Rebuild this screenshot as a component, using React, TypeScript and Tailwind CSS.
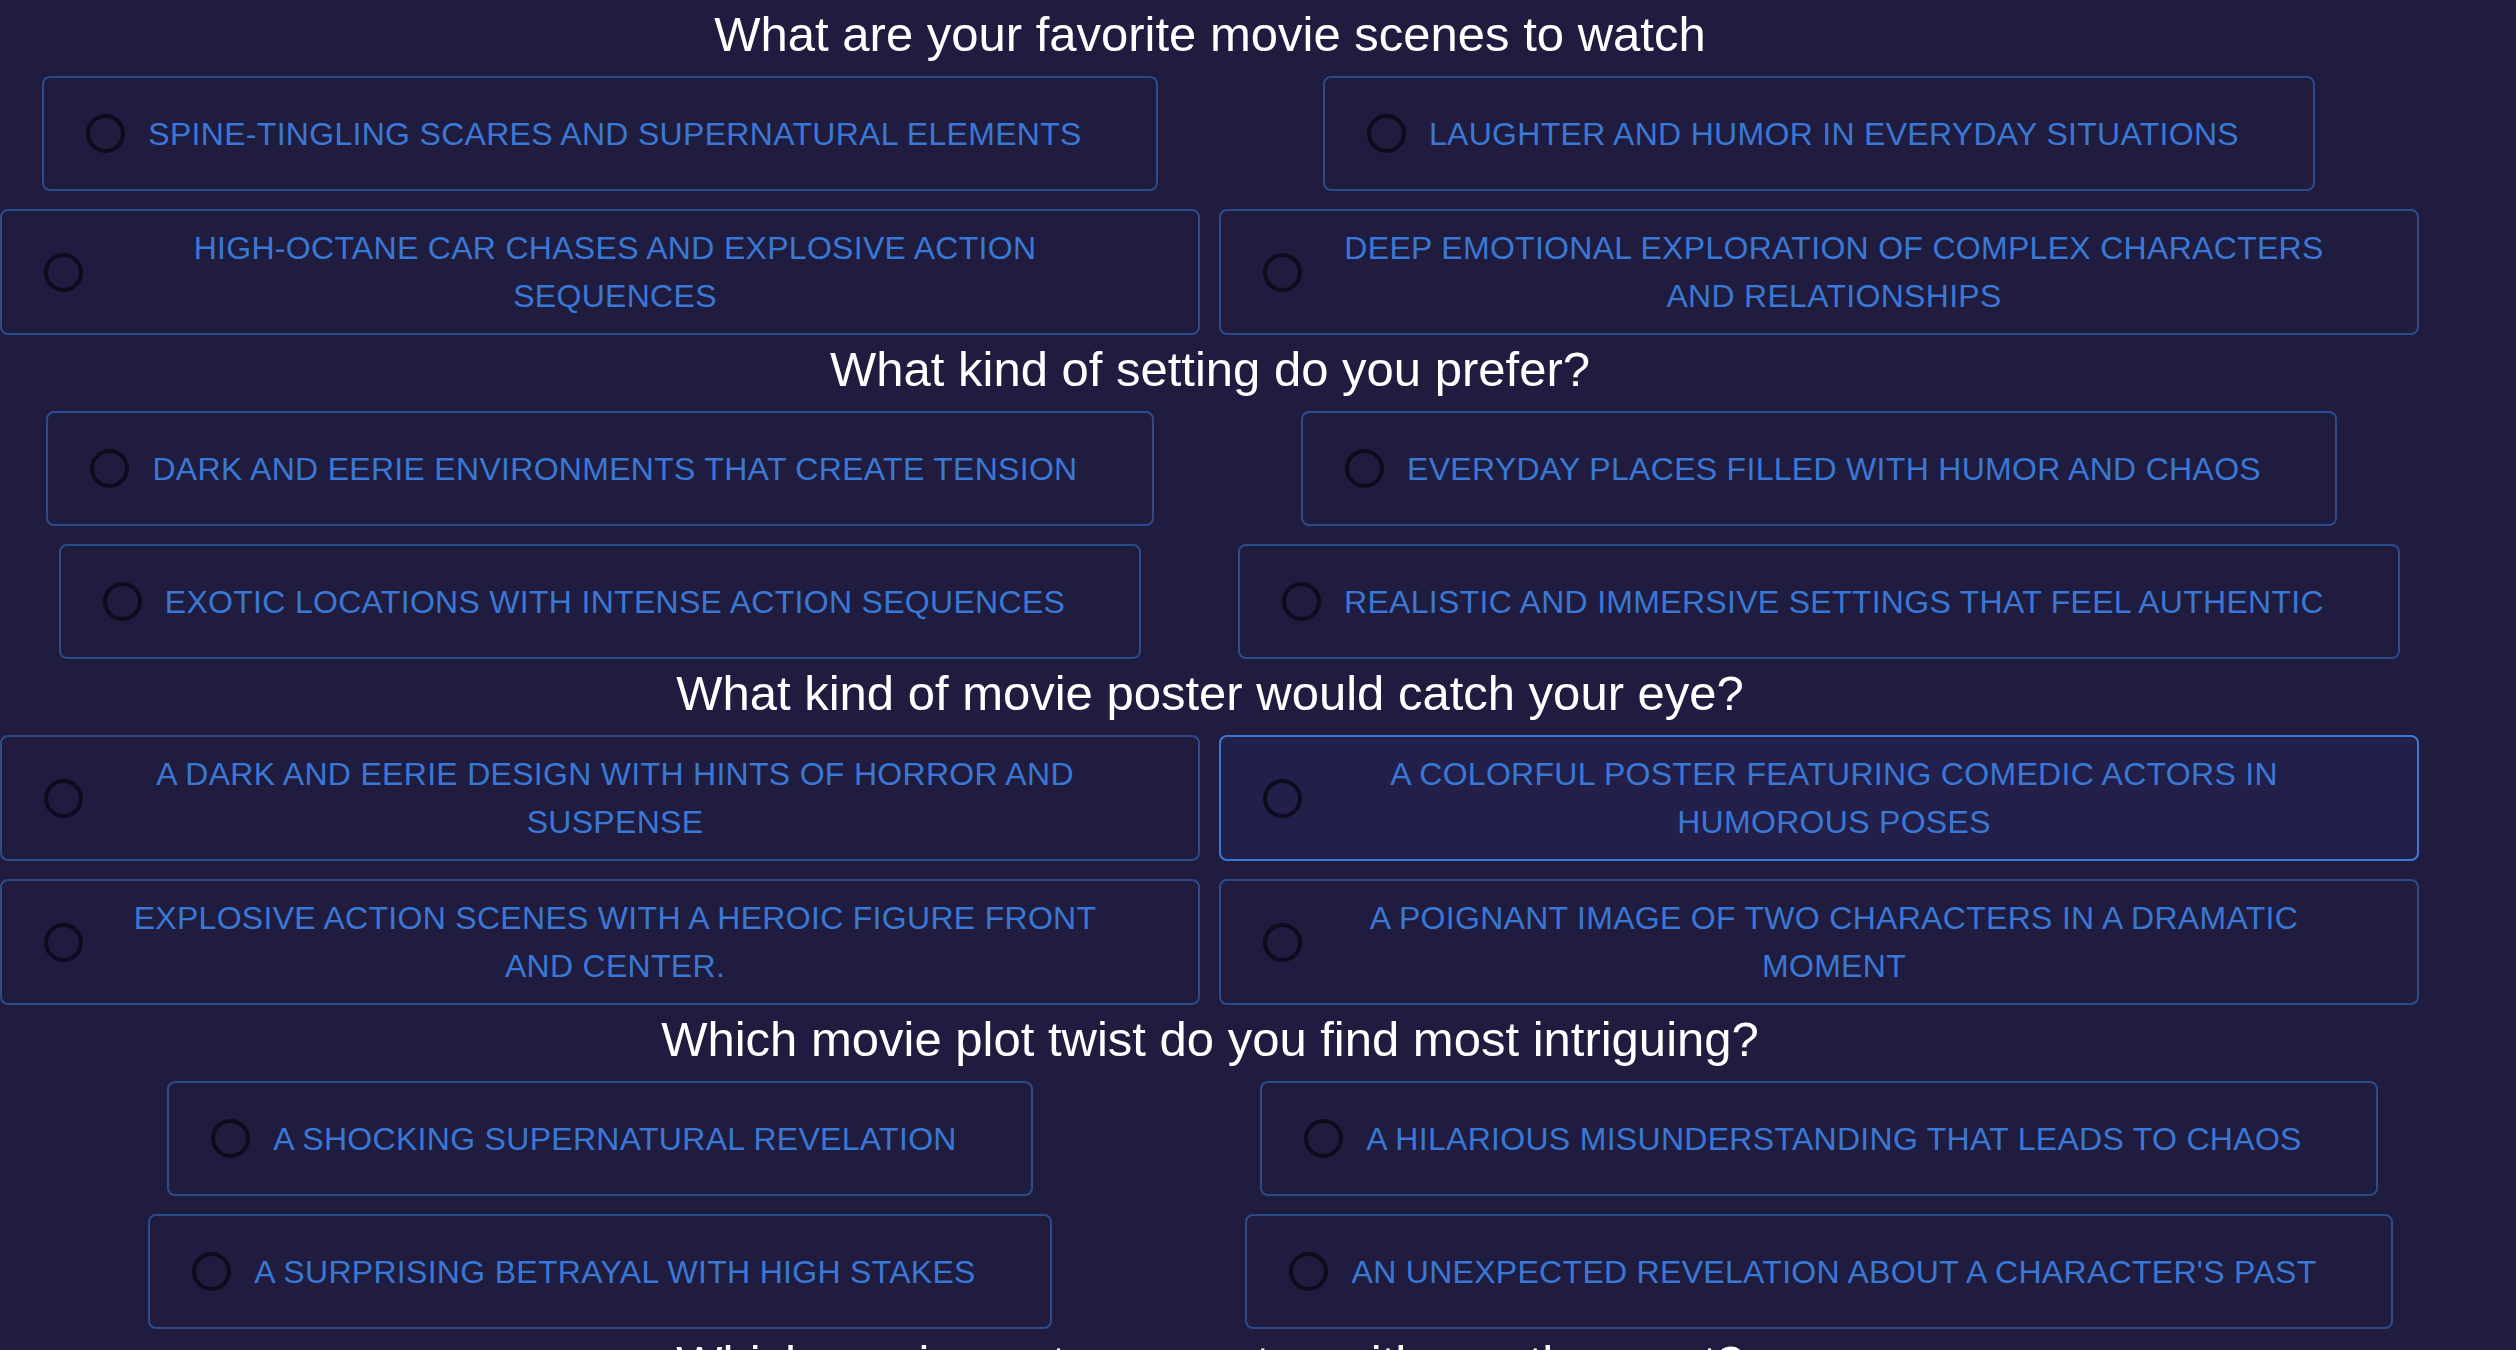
const sections: { title: string; options: string[]; active?: number }[] = [
  {
    title: 'What are your favorite movie scenes to watch',
    options: [
      'SPINE-TINGLING SCARES AND SUPERNATURAL ELEMENTS',
      'LAUGHTER AND HUMOR IN EVERYDAY SITUATIONS',
      'HIGH-OCTANE CAR CHASES AND EXPLOSIVE ACTION SEQUENCES',
      'DEEP EMOTIONAL EXPLORATION OF COMPLEX CHARACTERS AND RELATIONSHIPS',
    ],
  },
  {
    title: 'What kind of setting do you prefer?',
    options: [
      'DARK AND EERIE ENVIRONMENTS THAT CREATE TENSION',
      'EVERYDAY PLACES FILLED WITH HUMOR AND CHAOS',
      'EXOTIC LOCATIONS WITH INTENSE ACTION SEQUENCES',
      'REALISTIC AND IMMERSIVE SETTINGS THAT FEEL AUTHENTIC',
    ],
  },
  {
    title: 'What kind of movie poster would catch your eye?',
    active: 1,
    options: [
      'A DARK AND EERIE DESIGN WITH HINTS OF HORROR AND SUSPENSE',
      'A COLORFUL POSTER FEATURING COMEDIC ACTORS IN HUMOROUS POSES',
      'EXPLOSIVE ACTION SCENES WITH A HEROIC FIGURE FRONT AND CENTER.',
      'A POIGNANT IMAGE OF TWO CHARACTERS IN A DRAMATIC MOMENT',
    ],
  },
  {
    title: 'Which movie plot twist do you find most intriguing?',
    options: [
      'A SHOCKING SUPERNATURAL REVELATION',
      'A HILARIOUS MISUNDERSTANDING THAT LEADS TO CHAOS',
      'A SURPRISING BETRAYAL WITH HIGH STAKES',
      "AN UNEXPECTED REVELATION ABOUT A CHARACTER'S PAST",
    ],
  },
  {
    title: 'Which movie quote resonates with you the most?',
    options: [
      'A CHILLING LINE WHISPERED IN THE DARK',
      'A WITTY ONE-LINER THAT MAKES EVERYONE LAUGH',
      'A BOLD BATTLE CRY BEFORE THE FINAL SHOWDOWN',
      'A HEARTFELT CONFESSION THAT CHANGES EVERYTHING',
    ],
  },
];

function Option({ label, active }: { label: string; active?: boolean }) {
  return (
    <label
      className={`justify-self-center flex items-center gap-[23px] min-h-[115px] rounded-lg border-2 pl-[42px] pr-[74px] py-[13px] cursor-pointer ${
        active ? 'border-[#3b78d6] bg-[#221f4a]' : 'border-[#2c4b8c]'
      }`}
    >
      <span className="w-[39px] h-[39px] shrink-0 rounded-full border-4 border-[#0d0b1c]" />
      <span className="text-center text-[32px] leading-[48px] tracking-[0.3px] text-[#3a78d4]">{label}</span>
    </label>
  );
}

export default function App() {
  return (
    <div className="min-h-screen bg-[#1f1c40] font-['Liberation_Sans',Arial,sans-serif] overflow-hidden">
      <div className="w-[2420px]">
        {sections.map((s) => (
          <section key={s.title}>
            <h2 className="text-center text-white text-[49px] leading-[68px] font-normal">{s.title}</h2>
            <div className="mt-2 grid grid-cols-[1200px_1200px] gap-x-[19px] gap-y-[18px]">
              {s.options.map((o, i) => (
                <Option key={o} label={o} active={s.active === i} />
              ))}
            </div>
          </section>
        ))}
      </div>
    </div>
  );
}
